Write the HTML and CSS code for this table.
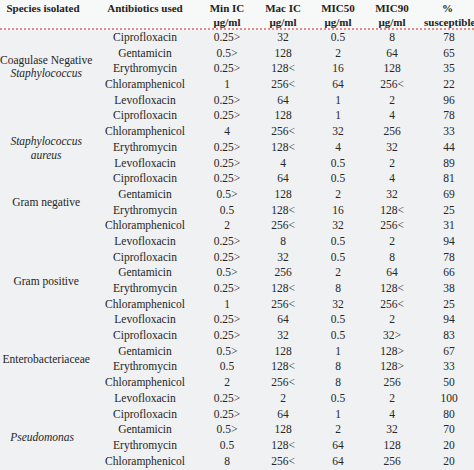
FILE: index.html
```html
<!DOCTYPE html>
<html>
<head>
<meta charset="utf-8">
<link rel="stylesheet" href="styles.css">
</head>
<body>
<div class="sheet">
  <div class="head">
    <div class="h">Species isolated</div>
    <div class="h">Antibiotics used</div>
    <div class="h">Min IC<br>µg/ml</div>
    <div class="h">Mac IC<br>µg/ml</div>
    <div class="h">MIC50<br>µg/ml</div>
    <div class="h">MIC90<br>µg/ml</div>
    <div class="h h-last">%<br>susceptible</div>
  </div>
  <div class="body">
    <div class="species">
      <div class="sp g-coag">Coagulase Negative<br><i>Staphylococcus</i></div>
      <div class="sp g-aureus"><i>Staphylococcus<br>aureus</i></div>
      <div class="sp g-neg">Gram negative</div>
      <div class="sp g-pos">Gram positive</div>
      <div class="sp g-entero">Enterobacteriaceae</div>
      <div class="sp g-pseudo"><i>Pseudomonas</i></div>
    </div>
    <div class="rows">
      <div class="r"><span>Ciprofloxacin</span><span>0.25&gt;</span><span>32</span><span>0.5</span><span>8</span><span>78</span></div>
      <div class="r"><span>Gentamicin</span><span>0.5&gt;</span><span>128</span><span>2</span><span>64</span><span>65</span></div>
      <div class="r"><span>Erythromycin</span><span>0.25&gt;</span><span>128&lt;</span><span>16</span><span>128</span><span>35</span></div>
      <div class="r"><span>Chloramphenicol</span><span>1</span><span>256&lt;</span><span>64</span><span>256&lt;</span><span>22</span></div>
      <div class="r"><span>Levofloxacin</span><span>0.25&gt;</span><span>64</span><span>1</span><span>2</span><span>96</span></div>
      <div class="r"><span>Ciprofloxacin</span><span>0.25&gt;</span><span>128</span><span>1</span><span>4</span><span>78</span></div>
      <div class="r"><span>Chloramphenicol</span><span>4</span><span>256&lt;</span><span>32</span><span>256</span><span>33</span></div>
      <div class="r"><span>Erythromycin</span><span>0.25&gt;</span><span>128&lt;</span><span>4</span><span>32</span><span>44</span></div>
      <div class="r"><span>Levofloxacin</span><span>0.25&gt;</span><span>4</span><span>0.5</span><span>2</span><span>89</span></div>
      <div class="r"><span>Ciprofloxacin</span><span>0.25&gt;</span><span>64</span><span>0.5</span><span>4</span><span>81</span></div>
      <div class="r"><span>Gentamicin</span><span>0.5&gt;</span><span>128</span><span>2</span><span>32</span><span>69</span></div>
      <div class="r"><span>Erythromycin</span><span>0.5</span><span>128&lt;</span><span>16</span><span>128&lt;</span><span>25</span></div>
      <div class="r"><span>Chloramphenicol</span><span>2</span><span>256&lt;</span><span>32</span><span>256&lt;</span><span>31</span></div>
      <div class="r"><span>Levofloxacin</span><span>0.25&gt;</span><span>8</span><span>0.5</span><span>2</span><span>94</span></div>
      <div class="r"><span>Ciprofloxacin</span><span>0.25&gt;</span><span>32</span><span>0.5</span><span>8</span><span>78</span></div>
      <div class="r"><span>Gentamicin</span><span>0.5&gt;</span><span>256</span><span>2</span><span>64</span><span>66</span></div>
      <div class="r"><span>Erythromycin</span><span>0.25&gt;</span><span>128&lt;</span><span>8</span><span>128&lt;</span><span>38</span></div>
      <div class="r"><span>Chloramphenicol</span><span>1</span><span>256&lt;</span><span>32</span><span>256&lt;</span><span>25</span></div>
      <div class="r"><span>Levofloxacin</span><span>0.25&gt;</span><span>64</span><span>0.5</span><span>2</span><span>94</span></div>
      <div class="r"><span>Ciprofloxacin</span><span>0.25&gt;</span><span>32</span><span>0.5</span><span>32&gt;</span><span>83</span></div>
      <div class="r"><span>Gentamicin</span><span>0.5&gt;</span><span>128</span><span>1</span><span>128&gt;</span><span>67</span></div>
      <div class="r"><span>Erythromycin</span><span>0.5</span><span>128&lt;</span><span>8</span><span>128&gt;</span><span>33</span></div>
      <div class="r"><span>Chloramphenicol</span><span>2</span><span>256&lt;</span><span>8</span><span>256</span><span>50</span></div>
      <div class="r"><span>Levofloxacin</span><span>0.25&gt;</span><span>2</span><span>0.5</span><span>2</span><span>100</span></div>
      <div class="r"><span>Ciprofloxacin</span><span>0.25&gt;</span><span>64</span><span>1</span><span>4</span><span>80</span></div>
      <div class="r"><span>Gentamicin</span><span>0.5&gt;</span><span>128</span><span>2</span><span>32</span><span>70</span></div>
      <div class="r"><span>Erythromycin</span><span>0.5</span><span>128&lt;</span><span>64</span><span>128</span><span>20</span></div>
      <div class="r"><span>Chloramphenicol</span><span>8</span><span>256&lt;</span><span>64</span><span>256</span><span>20</span></div>
    </div>
  </div>
</div>
</body>
</html>
```
FILE: styles.css
```css
html, body {
  margin: 0;
  padding: 0;
  background: #eff1f2;
}
.sheet {
  width: 474px;
  height: 470px;
  overflow: hidden;
  font-family: "Liberation Serif", Tinos, "Times New Roman", "DejaVu Serif", serif;
  font-size: 11.5px;
  color: #262626;
}
.head {
  display: grid;
  grid-template-columns: 86px 118px 46px 66px 44px 64px 50px;
  height: 30px;
  box-sizing: border-box;
  border-bottom: 2px dotted #e98a8a;
  background: #f7f8f8;
}
.h {
  font-weight: bold;
  font-size: 11px;
  text-align: center;
  line-height: 14px;
  padding-top: 1px;
  white-space: nowrap;
  color: #222;
}
.h-last {
  margin-right: 3px;
}
.body {
  display: flex;
}
.species {
  width: 86px;
  flex: none;
  display: grid;
  grid-template-rows: repeat(28, 15.7px);
}
.sp {
  grid-column: 1;
  align-self: center;
  justify-self: center;
  text-align: center;
  white-space: nowrap;
  line-height: 13px;
}
.g-coag { grid-row: 1 / span 5; margin-bottom: 4px; }
.g-aureus { grid-row: 6 / span 5; line-height: 14px; }
.g-neg { grid-row: 11 / span 2; }
.g-pos { grid-row: 16 / span 2; }
.g-entero { grid-row: 21 / span 2; }
.g-pseudo { grid-row: 26 / span 2; margin-right: 8px; }
.rows {
  flex: 1;
  display: flex;
  flex-direction: column;
}
.r {
  display: grid;
  grid-template-columns: 118px 46px 66px 44px 64px 50px;
  height: 15.7px;
  line-height: 15.7px;
  text-align: center;
  white-space: nowrap;
}
```
